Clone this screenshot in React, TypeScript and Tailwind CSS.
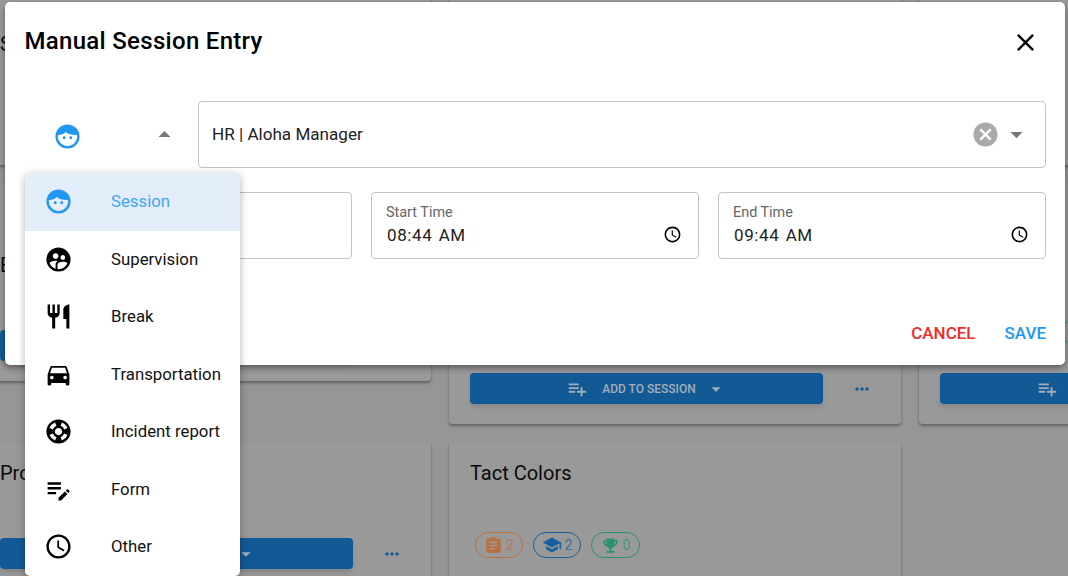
import React from "react";
import {
  MdAccessTime,
  MdArrowDropDown,
  MdArrowDropUp,
  MdAssignment,
  MdCancel,
  MdClose,
  MdDirectionsCar,
  MdEditNote,
  MdEmojiEvents,
  MdMoreHoriz,
  MdPlaylistAdd,
  MdRestaurant,
  MdSchool,
  MdSupervisedUserCircle,
  MdSupport,
} from "react-icons/md";

const FaceIcon = ({ className }: { className?: string }) => (
  <svg viewBox="0 0 24 24" className={className} fill="currentColor">
    <path d="M12 2a10 10 0 1 0 0 20 10 10 0 0 0 0-20Zm0 18a8 8 0 0 1-8-8c0-.4 0-.7.1-1 2.800-.3 5-1.300 6.400-2.700 1.500 1.500 4.600 2.500 9.300 2.500.1.400.2.800.2 1.200a8 8 0 0 1-8 8Z" />
    <circle cx="9.300" cy="13" r="1.200" />
    <circle cx="14.700" cy="13" r="1.200" />
  </svg>
);

const menuItems = [
  { label: "Session", icon: FaceIcon, active: true },
  { label: "Supervision", icon: MdSupervisedUserCircle },
  { label: "Break", icon: MdRestaurant },
  { label: "Transportation", icon: MdDirectionsCar },
  { label: "Incident report", icon: MdSupport },
  { label: "Form", icon: MdEditNote },
  { label: "Other", icon: MdAccessTime },
];

const Chips = () => (
  <div className="flex gap-[10px] ml-[5px] text-[14px]">
    <span className="flex items-center justify-center gap-[3px] w-[48px] h-[26px] rounded-full border-[1.500px] border-[#bd6f38] text-[#b07c58]">
      <MdAssignment className="w-[19px] h-[19px] text-[#bd6f38]" />2
    </span>
    <span className="flex items-center justify-center gap-[3px] w-[48px] h-[26px] rounded-full border-[1.500px] border-[#15609f] text-[#3a70a0]">
      <MdSchool className="w-[20px] h-[20px] text-[#15609f]" />2
    </span>
    <span className="flex items-center justify-center gap-[3px] w-[49px] h-[26px] rounded-full border-[1.500px] border-[#26926f] text-[#3d9a80]">
      <MdEmojiEvents className="w-[19px] h-[19px] text-[#26926f]" />0
    </span>
  </div>
);

const AddButton = () => (
  <div className="flex items-center">
    <div className="flex items-center justify-center gap-[8px] w-[353px] h-[31px] rounded bg-[#125a96] shadow-md text-[#a3adb6] text-[12px] font-medium">
      <MdPlaylistAdd className="w-[22px] h-[22px]" />
      <span className="ml-[6px] mr-[1px]">ADD TO SESSION</span>
      <MdArrowDropDown className="w-[22px] h-[22px]" />
    </div>
    <div className="flex justify-center w-[78px] text-[#125a96]">
      <MdMoreHoriz className="w-[20px] h-[20px]" />
    </div>
  </div>
);

const Card = ({
  title,
  chips,
  button,
  className,
}: {
  title?: string;
  chips?: boolean;
  button?: boolean;
  className?: string;
}) => (
  <div className={`flex flex-col rounded bg-[#999] shadow-[0_2px_3px_rgba(0,0,0,0.35)] pl-[21px] pb-[20px] ${className ?? ""}`}>
    <h3 className="text-[20px] leading-[24px] text-[#0a0a0a]">{title}</h3>
    <div className="mt-auto flex flex-col gap-[28px]">
      {chips && <Chips />}
      {button && <AddButton />}
    </div>
  </div>
);

const TimeField = ({ label, value, className }: { label: string; value: string; className?: string }) => (
  <div className={`flex items-center justify-between h-[67px] rounded border border-[#c4c4c4] pl-[14px] pr-[16px] ${className ?? ""}`}>
    <div className="flex flex-col">
      <span className="text-[14.400px] leading-[18px] text-[#666]">{label}</span>
      <span className="ml-[1px] mt-[1px] text-[17px] leading-[24px] tracking-[0.6px] [word-spacing:1.500px] text-[#222]">{value}</span>
    </div>
    <MdAccessTime className="w-[19px] h-[19px] mt-[18px] text-black" />
  </div>
);

export default function App() {
  return (
    <div className="relative w-[1068px] h-[576px] overflow-hidden bg-[#969696] font-['Roboto',sans-serif]">
      {/* page behind the dialog, already dimmed by the backdrop */}
      <div className="grid grid-cols-[452px_452px_452px] grid-rows-[185px_241px_195px] gap-[18px] ml-[-21px] mt-[-20px]">
        <Card title="Sessions" className="pt-[52px]" />
        <Card />
        <Card />
        <Card title="Echoics" button className="pt-[70px] self-start h-[198px]" />
        <Card button />
        <Card chips button />
        <Card title="Probes" button className="pt-[19px] h-[147px]" />
        <Card title="Tact Colors" chips button className="pt-[19px]" />
      </div>

      {/* dialog */}
      <div className="absolute left-[5px] top-[2px] w-[1060px] h-[363px] rounded-[5px] bg-white shadow-[0_3px_6px_rgba(0,0,0,0.4)]">
        <div className="flex items-start justify-between pl-[19.500px] pr-[25px] pt-[24px]">
          <h2 className="text-[24px] leading-[30px] font-medium tracking-[0.3px] text-black">Manual Session Entry</h2>
          <MdClose className="w-[29px] h-[29px] mt-[2px] text-black" />
        </div>

        <div className="flex items-center mt-[44px] pr-[19px]">
          <div className="flex items-center w-[193px]">
            <FaceIcon className="w-[29px] h-[29px] ml-[48px] mt-[4px] text-[#2196f3]" />
            <MdArrowDropUp className="w-[29px] h-[29px] ml-[68px] text-[#777]" />
          </div>
          <div className="flex flex-1 items-center justify-between h-[67px] rounded border border-[#c4c4c4] pl-[13px] pr-[14px]">
            <span className="text-[17.100px] text-[#222]">HR | Aloha Manager</span>
            <div className="flex items-center gap-[3px]">
              <MdCancel className="w-[29px] h-[29px] mr-[-1px] text-[#aaa]" />
              <MdArrowDropDown className="w-[29px] h-[29px] text-[#777]" />
            </div>
          </div>
        </div>

        <div className="flex gap-[19px] mt-[24px] pl-[20px] pr-[19px]">
          <div className="w-[327px] h-[67px] rounded border border-[#c4c4c4]" />
          <TimeField label="Start Time" value="08:44 AM" className="w-[328px]" />
          <TimeField label="End Time" value="09:44 AM" className="flex-1" />
        </div>

        <div className="flex justify-end gap-[29px] mt-[61px] pr-[19px] text-[17px] leading-[26px] font-medium">
          <span className="text-[#f02b2b]">CANCEL</span>
          <span className="text-[#2196f3]">SAVE</span>
        </div>
      </div>

      {/* session type menu */}
      <ul className="absolute left-[25px] top-[173px] w-[215px] h-[403px] rounded-[5px] bg-white shadow-[0_2px_8px_rgba(0,0,0,0.3)] overflow-hidden">
        {menuItems.map((item) => (
          <li
            key={item.label}
            className={`flex items-center h-[57.500px] pl-[18.500px] ${item.active ? "bg-[#e3eefa] text-[#42a5f5]" : "text-[#111]"}`}
          >
            <item.icon className={`w-[29px] h-[29px] ${item.active ? "text-[#2196f3]" : "text-black"}`} />
            <span className="ml-[38.500px] text-[16.800px]">{item.label}</span>
          </li>
        ))}
      </ul>
    </div>
  );
}
